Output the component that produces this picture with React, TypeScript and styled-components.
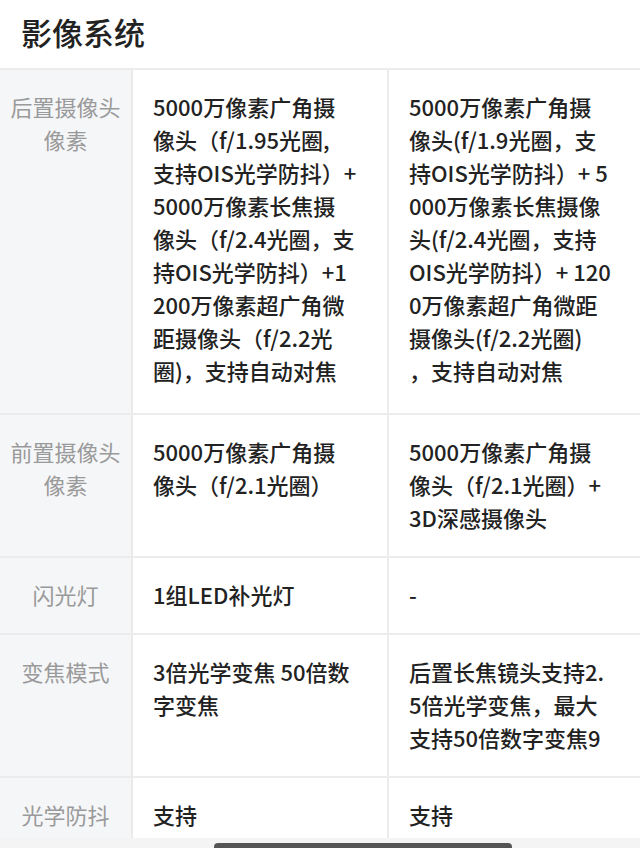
import { createGlobalStyle, styled } from "styled-components";

const GlobalStyle = createGlobalStyle`
  html, body {
    margin: 0;
    padding: 0;
    background: #ffffff;
  }
  body {
    font-family: "Noto Sans CJK SC", "Noto Sans", sans-serif;
    overflow: hidden;
  }
`;

const Page = styled.div`
  width: 640px;
  height: 848px;
  display: flex;
  flex-direction: column;
  overflow: hidden;
  background: #f4f4f4;
`;

const SectionTitle = styled.h2`
  margin: 0;
  flex-shrink: 0;
  display: flex;
  align-items: center;
  height: 63px;
  padding: 0 0 5px 21px;
  font-size: 31px;
  font-weight: 500;
  color: #222;
  background: #fff;
  border-bottom: 2px solid #ececec;
`;

const Table = styled.div`
  display: grid;
  grid-template-columns: 133px 256px 1fr;
  align-content: start;
  background: #fff;
  height: 768px;
  flex-shrink: 0;
  overflow: hidden;
`;

const LabelCell = styled.div<{ $last?: boolean; $extra?: number }>`
  background: #f5f6f8;
  color: #9a9a9a;
  font-size: 22px;
  line-height: 33px;
  text-align: center;
  padding: 20px 4px ${(p) => 22 + (p.$extra ?? 0)}px;
  border-right: 2px solid #eaeaea;
  border-bottom: ${(p) => (p.$last ? "none" : "2px solid #ececec")};
`;

const ValueCell = styled.div<{ $right?: boolean; $last?: boolean; $extra?: number }>`
  color: #222;
  font-size: 22px;
  line-height: 33px;
  font-weight: 500;
  padding: 20px 10px ${(p) => 22 + (p.$extra ?? 0)}px 20px;
  white-space: nowrap;
  border-right: ${(p) => (p.$right ? "none" : "2px solid #ececec")};
  border-bottom: ${(p) => (p.$last ? "none" : "2px solid #ececec")};
`;

const Footer = styled.div`
  flex: 1;
  display: flex;
  justify-content: center;
  align-items: flex-end;
  background: #f4f4f4;
`;

const HomeBar = styled.div`
  width: 298px;
  height: 5px;
  margin-left: 86px;
  background: #555;
  border-radius: 4px 4px 0 0;
`;

type Row = { label: string[]; left: string[]; right: string[]; extra?: number };

const rows: Row[] = [
  {
    label: ["后置摄像头", "像素"],
    extra: 4,
    left: [
      "5000万像素广角摄",
      "像头（f/1.95光圈,",
      "支持OIS光学防抖）+",
      "5000万像素长焦摄",
      "像头（f/2.4光圈，支",
      "持OIS光学防抖）+1",
      "200万像素超广角微",
      "距摄像头（f/2.2光",
      "圈)，支持自动对焦",
    ],
    right: [
      "5000万像素广角摄",
      "像头(f/1.9光圈，支",
      "持OIS光学防抖）+ 5",
      "000万像素长焦摄像",
      "头(f/2.4光圈，支持",
      "OIS光学防抖）+ 120",
      "0万像素超广角微距",
      "摄像头(f/2.2光圈)",
      "，支持自动对焦",
    ],
  },
  {
    label: ["前置摄像头", "像素"],
    left: ["5000万像素广角摄", "像头（f/2.1光圈）"],
    right: ["5000万像素广角摄", "像头（f/2.1光圈）+", "3D深感摄像头"],
  },
  {
    label: ["闪光灯"],
    left: ["1组LED补光灯"],
    right: ["-"],
  },
  {
    label: ["变焦模式"],
    left: ["3倍光学变焦 50倍数", "字变焦"],
    right: ["后置长焦镜头支持2.", "5倍光学变焦，最大", "支持50倍数字变焦9"],
  },
  {
    label: ["光学防抖"],
    left: ["支持"],
    right: ["支持"],
  },
];

function Lines({ lines }: { lines: string[] }) {
  return (
    <>
      {lines.map((l, i) => (
        <div key={i}>{l}</div>
      ))}
    </>
  );
}

export default function App() {
  return (
    <>
      <GlobalStyle />
      <Page>
        <SectionTitle>影像系统</SectionTitle>
        <Table>
          {rows.map((r, i) => {
            const last = i === rows.length - 1;
            return [
              <LabelCell key={`l${i}`} $last={last} $extra={r.extra}>
                <Lines lines={r.label} />
              </LabelCell>,
              <ValueCell key={`a${i}`} $last={last} $extra={r.extra}>
                <Lines lines={r.left} />
              </ValueCell>,
              <ValueCell key={`b${i}`} $right $last={last} $extra={r.extra}>
                <Lines lines={r.right} />
              </ValueCell>,
            ];
          })}
        </Table>
        <Footer>
          <HomeBar />
        </Footer>
      </Page>
    </>
  );
}
